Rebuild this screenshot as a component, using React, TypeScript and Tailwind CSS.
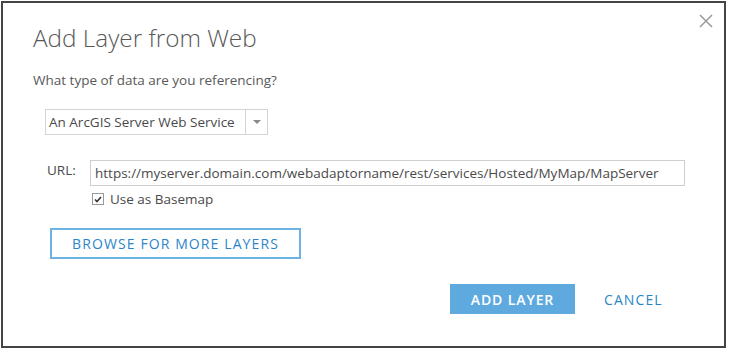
import React from 'react';

const App: React.FC = () => {
  return (
    <div className="w-[735px] h-[353px] bg-white pl-px pt-px" style={{ fontFamily: '"Open Sans", Lato, sans-serif' }}>
      <div className="relative w-[725px] h-[347px] border-2 border-[#444] bg-white">
        <button className="absolute right-[9px] top-[9px] w-[18px] h-[18px] flex items-center justify-center text-[#9a9a9a]">
          <svg width="14" height="14" viewBox="0 0 14 14" fill="none" stroke="currentColor" strokeWidth="1.5">
            <path d="M1 1 L13 13 M13 1 L1 13" />
          </svg>
        </button>

        <div className="pl-[30px] pt-[19px]">
          <h1 className="text-[24.3px] font-light text-[#595959] leading-[32px]">Add Layer from Web</h1>
          <p className="mt-[17px] text-[13.5px] text-[#595959] leading-[18px]">What type of data are you referencing?</p>

          <div className="mt-[20px] ml-[12px] flex w-[223px] h-[26px] border border-[#d4d4d4]">
            <div className="flex-1 flex items-center pl-[3px] text-[13.5px] text-[#4a4a4a] whitespace-nowrap">An ArcGIS Server Web Service</div>
            <div className="w-[22px] border-l border-[#d4d4d4] flex items-center justify-center">
              <svg width="8" height="4" viewBox="0 0 8 4"><path d="M0 0 L8 0 L4 4 Z" fill="#8a8a8a" /></svg>
            </div>
          </div>

          <div className="mt-[25px] flex items-start">
            <span className="ml-[14px] w-[43px] text-[13.5px] text-[#4a4a4a] leading-[20px]">URL:</span>
            <div className="w-[595px] h-[26px] border border-[#cfcfcf] flex items-center pl-[4px] text-[13.5px] text-[#4a4a4a] whitespace-nowrap overflow-hidden">
              https://myserver.domain.com/webadaptorname/rest/services/Hosted/MyMap/MapServer
            </div>
          </div>

          <label className="mt-[5px] ml-[59px] flex items-center gap-[6px] text-[13.5px] text-[#4a4a4a] leading-[16px]">
            <span className="w-[12px] h-[12px] border border-[#9a9a9a] bg-white flex items-center justify-center">
              <svg width="8" height="7" viewBox="0 0 8 7" fill="none" stroke="#333" strokeWidth="1.6">
                <path d="M1 3.5 L3 5.5 L7 1" />
              </svg>
            </span>
            Use as Basemap
          </label>

          <button className="mt-[21px] ml-[17px] w-[251px] h-[31px] border-2 border-[#6cb3e3] text-[#2b86c9] text-[14px] font-medium tracking-[1.1px] flex items-center justify-center">
            BROWSE FOR MORE LAYERS
          </button>
        </div>

        <div className="mt-[25px] flex items-center pl-[447px]">
          <button className="w-[125px] h-[30px] bg-[#5eaadf] text-white text-[14px] font-semibold tracking-[0.9px] flex items-center justify-center">
            ADD LAYER
          </button>
          <button className="ml-[29px] text-[#2b86c9] text-[14px] font-medium tracking-[1.1px]">CANCEL</button>
        </div>
      </div>
    </div>
  );
};

export default App;
